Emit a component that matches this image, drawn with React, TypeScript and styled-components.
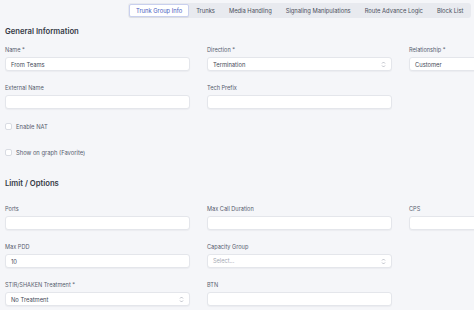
import React from "react";
import styled, { createGlobalStyle } from "styled-components";

const GlobalStyle = createGlobalStyle`
  html, body {
    margin: 0;
    padding: 0;
    background: #f5f6f9;
    font-family: Inter, "Noto Sans", "Liberation Sans", sans-serif;
    color: #3d4250;
    overflow: hidden;
  }
`;

// --- data ---------------------------------------------

const tabs = [
  "Trunk Group Info",
  "Trunks",
  "Media Handling",
  "Signaling Manipulations",
  "Route Advance Logic",
  "Block List",
];

type Field = {
  label: string;
  value?: string;
  placeholder?: string;
  select?: boolean;
};

const generalRows: Field[][] = [
  [
    { label: "Name *", value: "From Teams" },
    { label: "Direction *", value: "Termination", select: true },
    { label: "Relationship *", value: "Customer" },
  ],
  [{ label: "External Name" }, { label: "Tech Prefix" }],
];

const limitRows: Field[][] = [
  [{ label: "Ports" }, { label: "Max Call Duration" }, { label: "CPS" }],
  [
    { label: "Max PDD", value: "10" },
    { label: "Capacity Group", placeholder: "Select...", select: true },
  ],
  [
    { label: "STIR/SHAKEN Treatment *", value: "No Treatment", select: true },
    { label: "BTN" },
  ],
];

// --- components ---------------------------------------

function UpDown() {
  return (
    <svg width="5" height="7" viewBox="0 0 10 14" fill="none">
      <path d="M2 5l3-3 3 3M2 9l3 3 3-3" stroke="#a3a8b3" strokeWidth="1.4" />
    </svg>
  );
}

function FormField({ field }: { field: Field }) {
  return (
    <FieldBox>
      <Label>{field.label}</Label>
      <Input>
        {field.value ? (
          <Value>{field.value}</Value>
        ) : (
          <Placeholder>{field.placeholder}</Placeholder>
        )}
        {field.select && <UpDown />}
      </Input>
    </FieldBox>
  );
}

function App() {
  return (
    <Page>
      <GlobalStyle />
      <TabBar>
        {tabs.map((t, i) => (
          <Tab key={t} $active={i === 0}>
            {t}
          </Tab>
        ))}
      </TabBar>

      <SectionTitle $gap={9} $top={9}>
        General Information
      </SectionTitle>
      {generalRows.map((row, i) => (
        <Row key={i}>
          {row.map((f) => (
            <FormField key={f.label} field={f} />
          ))}
        </Row>
      ))}

      <Check $top={3}>
        <Box />
        Enable NAT
      </Check>
      <Check $top={18}>
        <Box />
        Show on graph (Favorite)
      </Check>

      <SectionTitle $gap={16} $top={23}>
        Limit / Options
      </SectionTitle>
      {limitRows.map((row, i) => (
        <Row key={i}>
          {row.map((f) => (
            <FormField key={f.label} field={f} />
          ))}
        </Row>
      ))}
    </Page>
  );
}

export default App;

// styled

const Page = styled.div`
  width: 620px;
  padding: 3px 0 0 5px;
  box-sizing: border-box;
  height: 310px;
  overflow: hidden;
`;

const TabBar = styled.div`
  display: flex;
  align-items: center;
  width: fit-content;
  margin-left: 123px;
  padding: 1px;
  height: 15px;
  box-sizing: border-box;
  background: #e8eaef;
  border-radius: 3px;
`;

const Tab = styled.div<{ $active?: boolean }>`
  height: 13px;
  display: flex;
  align-items: center;
  padding: 0 6px;
  font-size: 5.8px;
  white-space: nowrap;
  box-sizing: border-box;
  border-radius: 2px;
  color: ${(p) => (p.$active ? "#4a5cc0" : "#4a4f5c")};
  background: ${(p) => (p.$active ? "#ffffff" : "transparent")};
  border: 1px solid ${(p) => (p.$active ? "#c9d0ee" : "transparent")};
  box-shadow: ${(p) => (p.$active ? "0 1px 1px rgba(0,0,0,0.06)" : "none")};
`;

const SectionTitle = styled.div<{ $gap: number; $top: number }>`
  margin-top: ${(p) => p.$top}px;
  margin-bottom: ${(p) => p.$gap}px;
  height: 10px;
  line-height: 10px;
  font-size: 7.7px;
  font-weight: 600;
  color: #353a46;
`;

const Row = styled.div`
  display: grid;
  grid-template-columns: repeat(3, 185px);
  column-gap: 17px;
  margin-bottom: 13px;
`;

const FieldBox = styled.div`
  display: flex;
  flex-direction: column;
  gap: 3px;
`;

const Label = styled.div`
  height: 8px;
  line-height: 8px;
  font-size: 5.6px;
  color: #565c6e;
  white-space: nowrap;
`;

const Input = styled.div`
  height: 14px;
  box-sizing: border-box;
  background: #ffffff;
  border: 1px solid #e4e6eb;
  border-radius: 3px;
  display: flex;
  align-items: center;
  justify-content: space-between;
  padding: 0 5px 0 5px;
  box-shadow: 0 1px 1px rgba(20, 30, 60, 0.04);
`;

const Value = styled.span`
  font-size: 5.8px;
  color: #444957;
`;

const Placeholder = styled.span`
  font-size: 5.6px;
  color: #a5a9b4;
`;

const Check = styled.label<{ $top: number }>`
  display: flex;
  align-items: center;
  gap: 4px;
  margin-top: ${(p) => p.$top}px;
  height: 8px;
  font-size: 5.8px;
  color: #565c6e;
`;

const Box = styled.span`
  width: 7px;
  height: 7px;
  box-sizing: border-box;
  background: #ffffff;
  border: 1px solid #d9dce3;
  border-radius: 2px;
`;
